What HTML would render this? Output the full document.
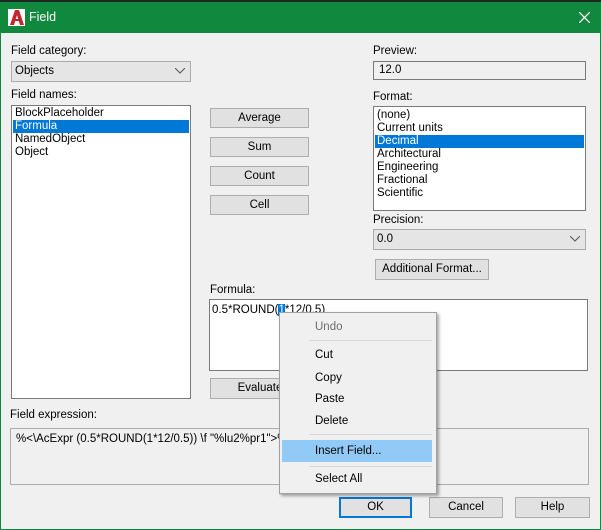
<!DOCTYPE html>
<html><head><style>
*{box-sizing:border-box;margin:0;padding:0}
body{width:601px;height:530px;overflow:hidden;background:#f0f0f0;font-family:"Liberation Sans",sans-serif;font-size:11.5px;color:#000;position:relative}
.a{position:absolute}
.lbl{position:absolute;line-height:14px}
.box{position:absolute;background:#fff;border:1px solid #7a7a7a}
.btn{position:absolute;background:#e1e1e1;border:1px solid #adadad;text-align:center;line-height:18px}
.combo{position:absolute;background:#e5e5e5;border:1px solid #acacac;padding-left:3px;line-height:18px}
.combo svg{position:absolute;right:5px;top:6px}
.it{height:13px;line-height:13px;padding-left:2px}
.sel{background:#0078d7;color:#fff}
.mi{position:absolute;left:35px;line-height:14px}
.sep{position:absolute;left:29px;right:4px;height:1px;background:#d7d7d7}
</style></head><body>
<div class="a" style="left:0;top:0;width:601px;height:2px;background:#1c2a24"></div>
<div class="a" style="left:0;top:2px;width:601px;height:31px;background:#10893e"></div>
<div class="a" style="left:0;top:33px;width:1px;height:497px;background:#10893e"></div>
<div class="a" style="left:600px;top:33px;width:1px;height:497px;background:#10893e"></div>
<div class="a" style="left:0;top:529px;width:601px;height:1px;background:#10893e"></div>
<svg class="a" style="left:8px;top:9px" width="17" height="17" viewBox="0 0 17 17"><rect width="17" height="17" fill="#fff"/><path d="M2 16 L7 1 L11 1 L16 16 L12 16 L9 6 L6 16Z" fill="#c1272d"/><path d="M7 11h4" stroke="#c1272d" stroke-width="2"/></svg>
<div class="a" style="left:29px;top:10px;color:#fff;font-size:12.5px">Field</div>
<svg class="a" style="left:579px;top:12px" width="11" height="11"><path d="M0 0L11 11M11 0L0 11" stroke="#fff" stroke-width="1.3"/></svg>

<div class="lbl" style="left:11px;top:44px">Field category:</div>
<div class="combo" style="left:11px;top:61px;width:180px;height:21px">Objects<svg width="10" height="6"><path d="M0 0L5 5L10 0" stroke="#555" fill="none"/></svg></div>
<div class="lbl" style="left:11px;top:88px">Field names:</div>
<div class="box" style="left:11px;top:105px;width:180px;height:294px;padding:1px">
<div class="it">BlockPlaceholder</div><div class="it sel">Formula</div><div class="it">NamedObject</div><div class="it">Object</div></div>

<div class="btn" style="left:210px;top:108px;width:99px;height:20px">Average</div>
<div class="btn" style="left:210px;top:137px;width:99px;height:20px">Sum</div>
<div class="btn" style="left:210px;top:166px;width:99px;height:20px">Count</div>
<div class="btn" style="left:210px;top:195px;width:99px;height:20px">Cell</div>

<div class="lbl" style="left:373px;top:44px">Preview:</div>
<div class="a" style="left:373px;top:61px;width:213px;height:19px;border:1px solid #7a7a7a;padding-left:5px;line-height:17px">12.0</div>
<div class="lbl" style="left:373px;top:90px">Format:</div>
<div class="box" style="left:373px;top:106px;width:213px;height:105px;padding:2px 1px">
<div class="it">(none)</div><div class="it">Current units</div><div class="it sel">Decimal</div><div class="it">Architectural</div><div class="it">Engineering</div><div class="it">Fractional</div><div class="it">Scientific</div></div>
<div class="lbl" style="left:373px;top:213px">Precision:</div>
<div class="combo" style="left:373px;top:229px;width:213px;height:21px">0.0<svg width="10" height="6"><path d="M0 0L5 5L10 0" stroke="#555" fill="none"/></svg></div>
<div class="btn" style="left:375px;top:259px;width:114px;height:21px">Additional Format...</div>

<div class="lbl" style="left:210px;top:283px">Formula:</div>
<div class="box" style="left:209px;top:299px;width:379px;height:72px;padding:3px 2px;line-height:14px">0.5*ROUND(<span class="sel">1</span>*12/0.5)</div>
<div class="btn" style="left:210px;top:378px;width:100px;height:21px">Evaluate</div>

<div class="lbl" style="left:10px;top:408px">Field expression:</div>
<div class="a" style="left:10px;top:428px;width:579px;height:57px;border:1px solid #adadad;padding:3px 5px;line-height:14px">%&lt;\AcExpr (0.5*ROUND(1*12/0.5)) \f "%lu2%pr1"&gt;%</div>

<div class="btn" style="left:339px;top:497px;width:73px;height:21px;border:2px solid #0078d7;line-height:17px">OK</div>
<div class="btn" style="left:429px;top:497px;width:74px;height:21px">Cancel</div>
<div class="btn" style="left:515px;top:497px;width:75px;height:21px">Help</div>

<div class="a" style="left:279px;top:312px;width:158px;height:182px;background:#f0f0f0;border:1px solid #a0a0a0;box-shadow:2px 2px 3px rgba(0,0,0,.35)">
<div class="mi" style="top:7px;color:#6d6d6d">Undo</div>
<div class="sep" style="top:27px"></div>
<div class="mi" style="top:35px">Cut</div>
<div class="mi" style="top:58px">Copy</div>
<div class="mi" style="top:79px">Paste</div>
<div class="mi" style="top:101px">Delete</div>
<div class="sep" style="top:121px"></div>
<div class="a" style="left:2px;top:127px;width:150px;height:22px;background:#91c9f7"></div>
<div class="mi" style="top:131px">Insert Field...</div>
<div class="sep" style="top:153px"></div>
<div class="mi" style="top:159px">Select All</div>
</div>
</body></html>
